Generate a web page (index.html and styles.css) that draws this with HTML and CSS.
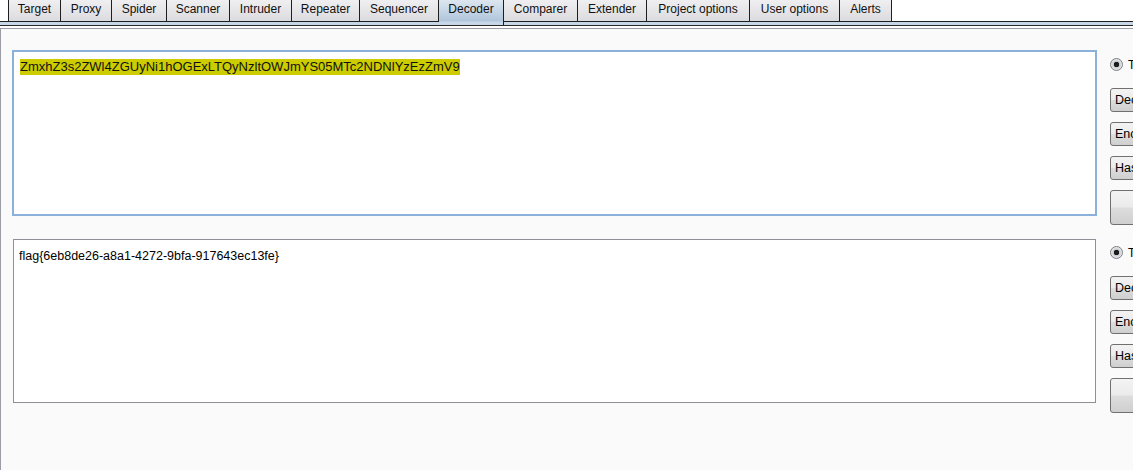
FILE: index.html
```html
<!DOCTYPE html>
<html>
<head>
<meta charset="utf-8">
<link rel="stylesheet" href="styles.css">
</head>
<body>
<div class="tabs">
  <div class="tab">Target</div>
  <div class="tab">Proxy</div>
  <div class="tab">Spider</div>
  <div class="tab">Scanner</div>
  <div class="tab">Intruder</div>
  <div class="tab">Repeater</div>
  <div class="tab">Sequencer</div>
  <div class="tab tab-active">Decoder</div>
  <div class="tab">Comparer</div>
  <div class="tab">Extender</div>
  <div class="tab">Project options</div>
  <div class="tab">User options</div>
  <div class="tab">Alerts</div>
</div>
<div class="main">
  <div class="panel">
    <div class="box box-focus"><span class="sel">ZmxhZ3s2ZWl4ZGUyNi1hOGExLTQyNzltOWJmYS05MTc2NDNlYzEzZmV9</span></div>
    <div class="controls">
      <label class="radio"><span class="radio-dot"></span><span>Text</span></label>
      <div class="btn">Decode as ...</div>
      <div class="btn">Encode as ...</div>
      <div class="btn">Hash ...</div>
      <div class="btn btn-tall">Smart decode</div>
    </div>
  </div>
  <div class="panel panel-second">
    <div class="box box-plain">flag{6eb8de26-a8a1-4272-9bfa-917643ec13fe}</div>
    <div class="controls">
      <label class="radio"><span class="radio-dot"></span><span>Text</span></label>
      <div class="btn">Decode as ...</div>
      <div class="btn">Encode as ...</div>
      <div class="btn">Hash ...</div>
      <div class="btn btn-tall">Smart decode</div>
    </div>
  </div>
</div>
</body>
</html>
```

FILE: styles.css
```css
html, body {
  margin: 0;
  padding: 0;
  background: #ffffff;
  overflow: hidden;
  width: 1133px;
  height: 471px;
  font-family: "Liberation Sans", Arial, sans-serif;
  color: #000;
}

.tabs {
  display: flex;
  align-items: flex-start;
  height: 25px;
  padding-left: 8px;
  background: linear-gradient(to bottom, #ffffff 0, #ffffff 21px, #1e1e1e 21px, #1e1e1e 22px, #c7d7e8 22px, #c7d7e8 25px);
  border-bottom: 1px solid #2a2a2a;
}

.tab {
  box-sizing: border-box;
  height: 21px;
  line-height: 18px;
  font-size: 12px;
  text-align: center;
  white-space: nowrap;
  border-right: 1px solid #1e1e1e;
  background: linear-gradient(to bottom, #efeff1, #dcdce0);
  color: #111;
}
.tab:first-child { border-left: 1px solid #1e1e1e; width: 53px; }
.tab:nth-child(2) { width: 51px; }
.tab:nth-child(3) { width: 55px; }
.tab:nth-child(4) { width: 63px; }
.tab:nth-child(5) { width: 62px; }
.tab:nth-child(6) { width: 68px; }
.tab:nth-child(7) { width: 79px; }
.tab:nth-child(8) { width: 65px; }
.tab:nth-child(9) { width: 74px; }
.tab:nth-child(10) { width: 69px; }
.tab:nth-child(11) { width: 103px; }
.tab:nth-child(12) { width: 90px; }
.tab:nth-child(13) { width: 52px; }

.tab-active {
  height: 25px;
  background: linear-gradient(to bottom, #dde6f0 0, #bccfe2 15px, #b0c5db 21px, #c7d7e8 22px, #c7d7e8 25px);
}

.main {
  margin-top: 2px;
  border-top: 1px solid #9c9ca6;
  border-left: 1px solid #9c9ca6;
  background: #fafafa;
  height: 442px;
  padding: 21px 0 0 11px;
  box-sizing: border-box;
}

.panel {
  display: flex;
  align-items: flex-start;
  gap: 13px;
  height: 166px;
}
.panel-second {
  margin-top: 22px;
}

.box {
  box-sizing: border-box;
  flex: none;
  background: #ffffff;
  font-size: 12.5px;
  line-height: 16px;
  white-space: nowrap;
}
.box-focus {
  width: 1085px;
  height: 166px;
  border: 2px solid #8bb0da;
  padding: 7px 6px;
  font-size: 13px;
}
.box-plain {
  width: 1083px;
  height: 164px;
  margin: 1px;
  border: 1px solid #8f8f98;
  padding: 8px 5px;
}

.sel {
  display: inline-block;
  background: #cccc00;
  line-height: 16px;
  color: #111;
}

.controls {
  flex: none;
  display: flex;
  flex-direction: column;
  gap: 10px;
  padding-top: 8px;
  width: 120px;
}

.radio {
  display: flex;
  align-items: center;
  gap: 5px;
  height: 13px;
  font-size: 12px;
  margin-bottom: 7px;
}
.radio-dot {
  box-sizing: border-box;
  width: 13px;
  height: 13px;
  border-radius: 50%;
  border: 1px solid #7b7e83;
  background: radial-gradient(circle at center, #1c1c1c 0, #1c1c1c 2.5px, #c9ccd0 3px, #eef0f2 6px);
  flex: none;
}

.btn {
  box-sizing: border-box;
  height: 24px;
  width: 118px;
  border: 1px solid #707070;
  border-radius: 3px;
  background: linear-gradient(to bottom, #f3f3f3 0, #ebebeb 48%, #dddddd 52%, #cfcfcf 100%);
  font-size: 12.5px;
  line-height: 22px;
  padding-left: 4px;
  white-space: nowrap;
}
.btn-tall {
  height: 35px;
  color: transparent;
}
```
